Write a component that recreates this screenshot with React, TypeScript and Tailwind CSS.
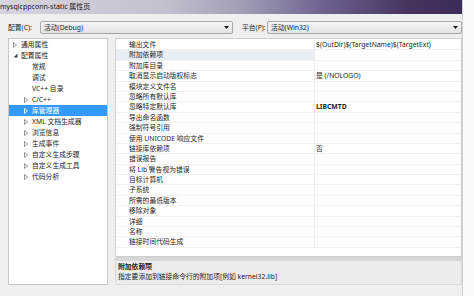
import React from "react";

type TreeItem = {
  label: string;
  level: 0 | 1;
  arrow?: "collapsed" | "expanded";
  selected?: boolean;
};

const tree: TreeItem[] = [
  { label: "通用属性", level: 0, arrow: "collapsed" },
  { label: "配置属性", level: 0, arrow: "expanded" },
  { label: "常规", level: 1 },
  { label: "调试", level: 1 },
  { label: "VC++ 目录", level: 1 },
  { label: "C/C++", level: 1, arrow: "collapsed" },
  { label: "库管理器", level: 1, arrow: "collapsed", selected: true },
  { label: "XML 文档生成器", level: 1, arrow: "collapsed" },
  { label: "浏览信息", level: 1, arrow: "collapsed" },
  { label: "生成事件", level: 1, arrow: "collapsed" },
  { label: "自定义生成步骤", level: 1, arrow: "collapsed" },
  { label: "自定义生成工具", level: 1, arrow: "collapsed" },
  { label: "代码分析", level: 1, arrow: "collapsed" },
];

type Row = { name: string; value?: string; bold?: boolean; selected?: boolean };

const rows: Row[] = [
  { name: "输出文件", value: "$(OutDir)$(TargetName)$(TargetExt)" },
  { name: "附加依赖项", selected: true },
  { name: "附加库目录" },
  { name: "取消显示启动版权标志", value: "是 (/NOLOGO)" },
  { name: "模块定义文件名" },
  { name: "忽略所有默认库" },
  { name: "忽略特定默认库", value: "LIBCMTD", bold: true },
  { name: "导出命名函数" },
  { name: "强制符号引用" },
  { name: "使用 UNICODE 响应文件" },
  { name: "链接库依赖项", value: "否" },
  { name: "错误报告" },
  { name: "将 Lib 警告视为错误" },
  { name: "目标计算机" },
  { name: "子系统" },
  { name: "所需的最低版本" },
  { name: "移除对象" },
  { name: "详细" },
  { name: "名称" },
  { name: "链接时间代码生成" },
];

function Arrow({ kind, light }: { kind?: "collapsed" | "expanded"; light?: boolean }) {
  if (!kind) return null;
  if (kind === "expanded") {
    return (
      <svg width="5" height="5" viewBox="0 0 5 5">
        <polygon points="4.5,0.5 4.5,4.5 0.5,4.5" fill={light ? "#ffffff" : "#3c3c3c"} />
      </svg>
    );
  }
  return (
    <svg width="4" height="6" viewBox="0 0 4 6">
      <polygon
        points="0.5,0.5 3.5,3 0.5,5.5"
        fill="none"
        stroke={light ? "#ffffff" : "#8a8a8a"}
        strokeWidth="0.9"
      />
    </svg>
  );
}

function Combo({ text, className }: { text: string; className: string }) {
  return (
    <div
      className={
        "h-[13px] flex items-center border border-[#a9a9a9] rounded-[2px] bg-gradient-to-b from-[#f6f6f6] to-[#e3e3e3] pl-[3px] pr-[3px] " +
        className
      }
    >
      <span className="flex-1 text-[#1e1e1e] leading-[11px]">{text}</span>
      <svg width="5" height="3" viewBox="0 0 5 3">
        <polygon points="0,0 5,0 2.5,3" fill="#1a1a1a" />
      </svg>
    </div>
  );
}

export default function App() {
  return (
    <div className="w-[474px] h-[296px] bg-[#fbfbfb] overflow-hidden font-['Noto_Sans','Noto_Sans_CJK_SC',sans-serif] text-[6.8px] text-[#1e1e1e]">
      <div className="w-[463px] h-full flex flex-col bg-[#efefef] border-r border-[#cfcfcf]">
        {/* Title bar */}
        <div className="h-[14px] shrink-0 flex items-center bg-[linear-gradient(to_right,#d6d4de_0%,#c4c1cf_35%,#a49eb6_52%,#6f6190_70%,#45355f_88%,#3c2c58_100%)]">
          <span className="ml-[0px] text-[7px] leading-[14px] text-[#1a1a1a] whitespace-nowrap">
            mysqlcppconn-static 属性页
          </span>
        </div>

        {/* Config row */}
        <div className="h-[24px] shrink-0 flex items-start pt-[7px]">
          <span className="ml-[8px] w-[32px] leading-[13px]">配置(C):</span>
          <Combo text="活动(Debug)" className="w-[193px]" />
          <span className="ml-[9px] w-[25px] leading-[13px]">平台(P):</span>
          <Combo text="活动(Win32)" className="w-[195px]" />
        </div>

        {/* Main area */}
        <div className="h-[247px] shrink-0 flex">
          {/* Tree */}
          <div className="ml-[8px] w-[100px] h-full bg-white border border-[#c9c9c9]">
            {tree.map((t, i) => (
              <div
                key={i}
                className={
                  "h-[11px] flex items-center whitespace-nowrap " +
                  (t.level === 0 ? "pl-[4px] " : "pl-[15px] ") +
                  (t.selected ? "bg-[#3399ff] text-white" : "")
                }
              >
                <span className="w-[8px] flex items-center">
                  <Arrow kind={t.arrow} light={t.selected} />
                </span>
                <span className="leading-[11px]">{t.label}</span>
              </div>
            ))}
          </div>

          {/* Right column */}
          <div className="ml-[7px] flex-1 h-full flex flex-col">
            <div className="h-[219px] bg-white border border-[#cfcfcf] pt-[1px]">
              {rows.map((r, i) => (
                <div key={i} className="h-[10.4px] flex border-b border-[#f1f1f1]">
                  <div
                    className={
                      "w-[198px] pl-[13px] leading-[10px] whitespace-nowrap " +
                      (r.selected ? "bg-[#e9edf4]" : "")
                    }
                  >
                    {r.name}
                  </div>
                  <div
                    className={
                      "flex-1 border-l border-[#ececec] pl-[1px] leading-[10px] whitespace-nowrap " +
                      (r.bold ? "font-bold" : "")
                    }
                  >
                    {r.value ?? ""}
                  </div>
                </div>
              ))}
            </div>
            <div className="h-[4px] bg-[#d7d7d7]" />
            <div className="h-[24px] bg-[#ececec] border border-[#dadada] border-t-0 pl-[2px] pt-[1px]">
              <div className="font-bold leading-[10px]">附加依赖项</div>
              <div className="leading-[10px] whitespace-nowrap">
                指定要添加到链接命令行的附加项[例如 kernel32.lib]
              </div>
            </div>
          </div>
        </div>
      </div>
    </div>
  );
}
